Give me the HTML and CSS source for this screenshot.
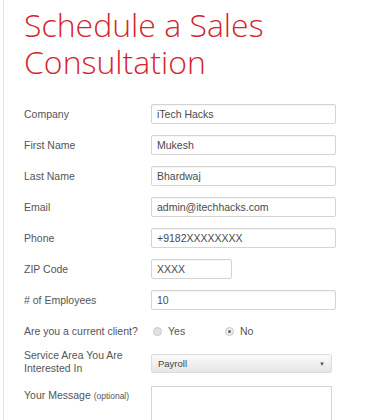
FILE: index.html
```html
<!DOCTYPE html>
<html>
<head>
<meta charset="utf-8">
<link rel="stylesheet" href="styles.css">
</head>
<body>
<div class="page">
  <h1 class="title">Schedule a Sales Consultation</h1>
  <form class="form">
    <label class="lbl">Company</label>
    <div class="field"><input class="inp" type="text" value="iTech Hacks"></div>
    <label class="lbl">First Name</label>
    <div class="field"><input class="inp" type="text" value="Mukesh"></div>
    <label class="lbl">Last Name</label>
    <div class="field"><input class="inp" type="text" value="Bhardwaj"></div>
    <label class="lbl">Email</label>
    <div class="field"><input class="inp" type="text" value="admin@itechhacks.com"></div>
    <label class="lbl">Phone</label>
    <div class="field"><input class="inp" type="text" value="+9182XXXXXXXX"></div>
    <label class="lbl">ZIP Code</label>
    <div class="field"><input class="inp zip" type="text" value="XXXX"></div>
    <label class="lbl"># of Employees</label>
    <div class="field"><input class="inp" type="text" value="10"></div>
    <label class="lbl">Are you a current client?</label>
    <div class="field radios">
      <span class="opt yes"><span class="radio"></span>Yes</span>
      <span class="opt"><span class="radio on"></span>No</span>
    </div>
    <label class="lbl two">Service Area You Are Interested In</label>
    <div class="field"><div class="select"><span>Payroll</span><span class="arrow">&#9660;</span></div></div>
    <label class="lbl msg">Your Message <small>(optional)</small></label>
    <div class="field"><div class="textarea"></div></div>
  </form>
</div>
</body>
</html>
```
FILE: styles.css
```css
html, body { margin: 0; padding: 0; background: #fff; }
body { font-family: "Liberation Sans", Arial, sans-serif; overflow: hidden; height: 420px; }
.page {
  margin-left: 3px;
  border-left: 1px solid #e4e4e4;
  padding-left: 20px;
  height: 420px;
  box-sizing: border-box;
  overflow: hidden;
}
.title {
  margin: 0;
  padding-top: 6px;
  width: 290px;
  font-family: "Open Sans", sans-serif;
  font-weight: 300;
  font-size: 32px;
  line-height: 37px;
  color: #d6262d;
}
.form {
  margin-top: 24px;
  display: grid;
  grid-template-columns: 127px 185px;
  row-gap: 11px;
  align-items: center;
}
.lbl {
  font-size: 10.5px;
  color: #555;
  line-height: 13px;
}
.lbl small { font-size: 8.5px; }
.inp {
  box-sizing: border-box;
  display: block;
  width: 185px;
  height: 20px;
  margin: 0;
  border: 1px solid #d4d4d4;
  border-radius: 2px;
  padding: 0 5px;
  font-family: "Liberation Sans", Arial, sans-serif;
  font-size: 10.5px;
  color: #4a4a4a;
  background: #fff;
  box-shadow: inset 0 1px 1px rgba(0,0,0,0.04);
}
.inp.zip { width: 81px; }
.radios {
  display: flex;
  height: 20px;
  align-items: center;
  font-size: 10.5px;
  color: #555;
  padding-left: 2px;
}
.opt { display: flex; align-items: center; }
.opt.yes { width: 72px; }
.radio {
  width: 7px; height: 7px;
  border-radius: 50%;
  border: 1px solid #c8c8c8;
  background: #e2e2e2;
  margin-right: 6px;
  position: relative;
}
.radio.on { background: #eee; }
.radio.on::after {
  content: "";
  position: absolute;
  left: 2px; top: 2px;
  width: 3px; height: 3px;
  border-radius: 50%;
  background: #666;
}
.two { align-self: start; margin-top: -3px; }
.select {
  box-sizing: border-box;
  width: 181px;
  height: 19px;
  border: 1px solid #ddd;
  border-radius: 2px;
  background: linear-gradient(#fafafa, #e6e6e6);
  display: flex;
  align-items: center;
  justify-content: space-between;
  padding: 0 6px 0 6px;
  font-size: 9.5px;
  color: #444;
}
.arrow { font-size: 6px; color: #555; }
.msg { align-self: start; margin-top: 3px; }
.textarea {
  box-sizing: border-box;
  width: 181px;
  height: 34px;
  border: 1px solid #d4d4d4;
  border-bottom: none;
  border-radius: 1px 1px 0 0;
  background: #fff;
}
```
